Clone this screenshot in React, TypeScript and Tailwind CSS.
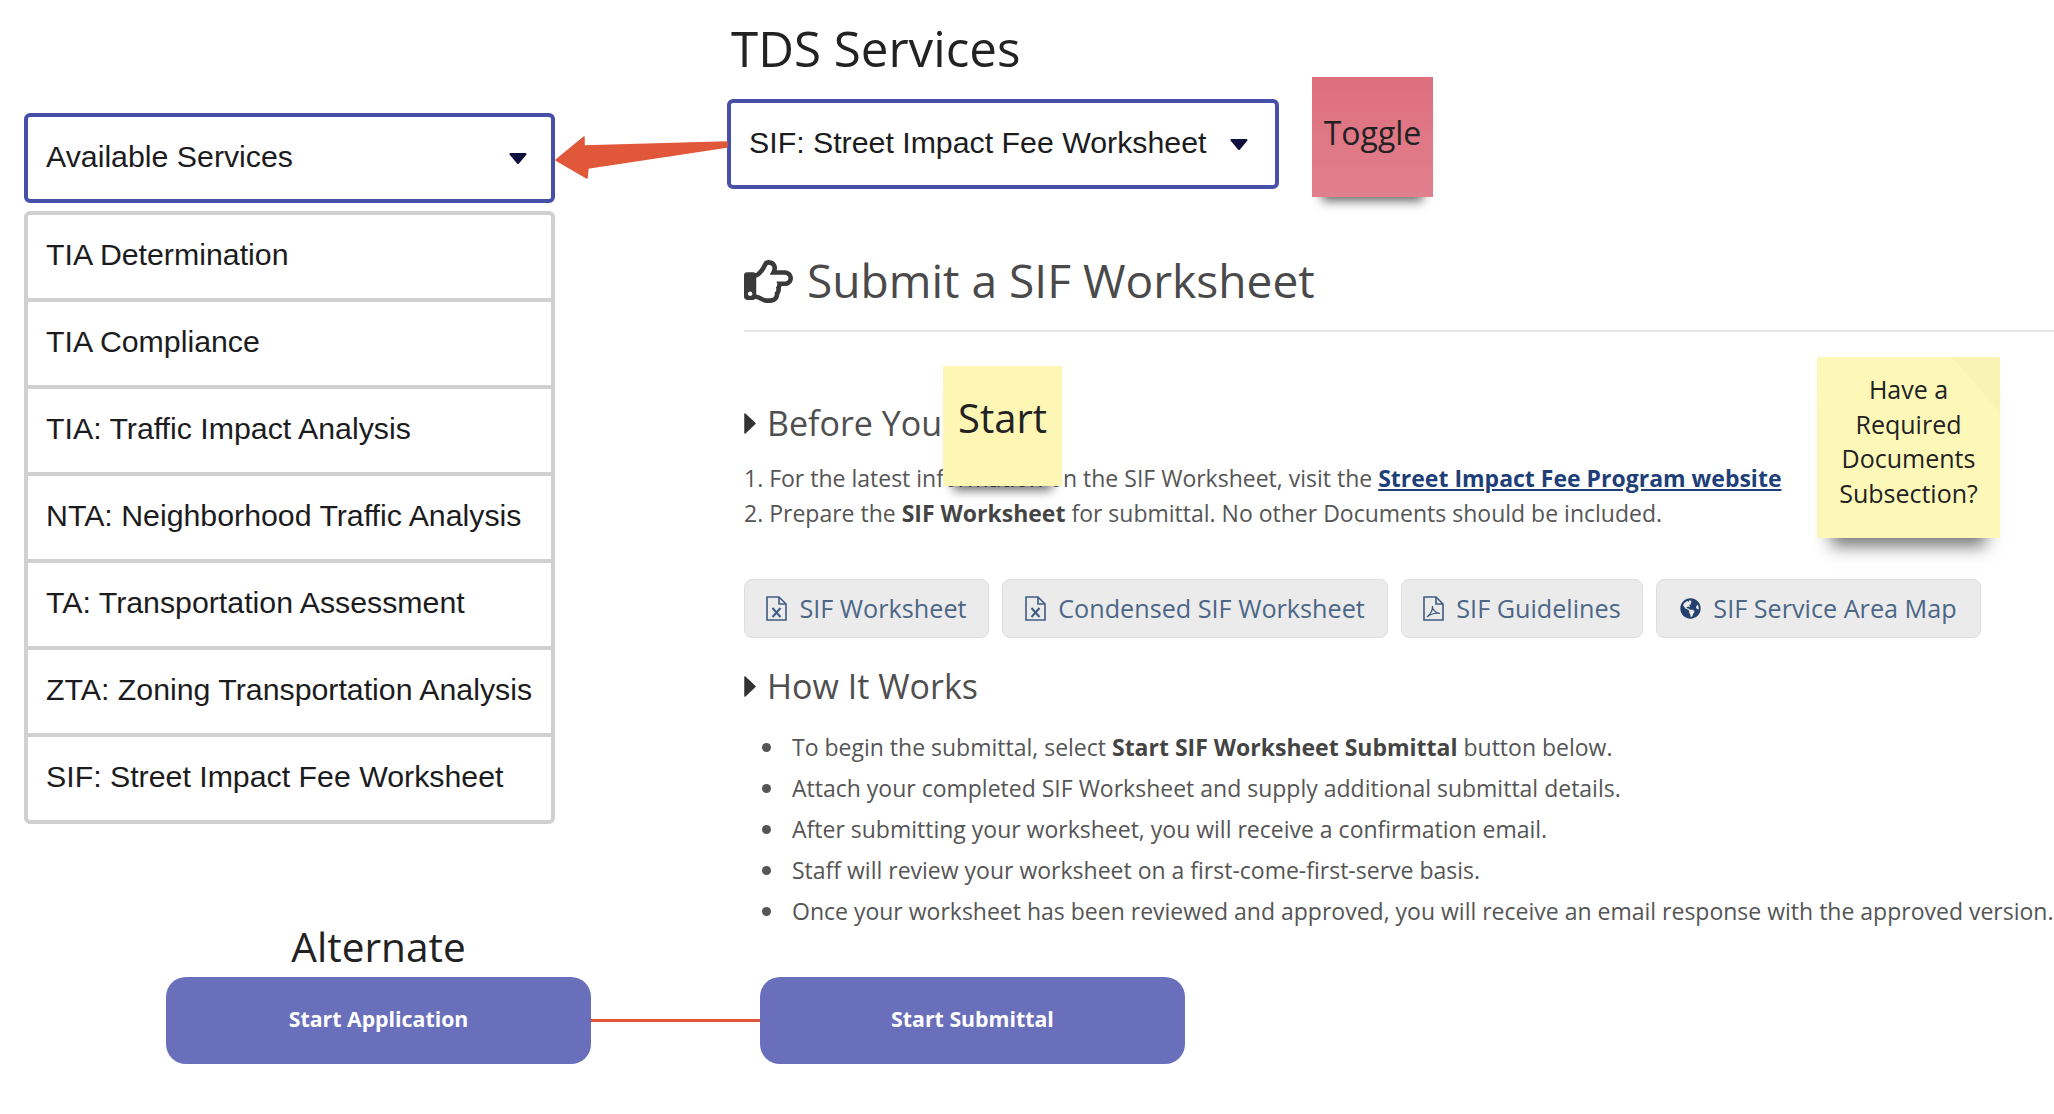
import { FaGlobeAmericas, FaRegHandPointRight } from 'react-icons/fa'
import type { ReactNode } from 'react'

const services = [
  'TIA Determination',
  'TIA Compliance',
  'TIA: Traffic Impact Analysis',
  'NTA: Neighborhood Traffic Analysis',
  'TA: Transportation Assessment',
  'ZTA: Zoning Transportation Analysis',
  'SIF: Street Impact Fee Worksheet',
]

function FileIcon({ children }: { children: ReactNode }) {
  return (
    <svg width="21" height="25" viewBox="0 0 21 25" fill="none" stroke="#3f5c82" strokeWidth="1.6" className="shrink-0">
      <path d="M1 1H13L20 8V24H1Z" />
      <path d="M13 1V8H20" />
      {children}
    </svg>
  )
}

const excel = <FileIcon><path d="M6.5 12L14.5 21M14.5 12L6.5 21" strokeWidth="2" /></FileIcon>
const pdf = <FileIcon><path d="M4 21C8 18 10 13 9.5 10C9 13 12 17 17 17.5C13 16.5 7 18 4 21Z" strokeWidth="1.2" /></FileIcon>

const docs = [
  { label: 'SIF Worksheet', icon: excel, width: 'w-[245px]' },
  { label: 'Condensed SIF Worksheet', icon: excel, width: 'w-[386px]' },
  { label: 'SIF Guidelines', icon: pdf, width: 'w-[242px]' },
  { label: 'SIF Service Area Map', icon: <FaGlobeAmericas className="text-[21px] text-[#24406e] shrink-0" />, width: 'w-[325px]' },
]

function Select({ label, className }: { label: string; className: string }) {
  return (
    <div className={`flex items-center justify-between h-[90px] border-[4px] border-[#474fa8] rounded-[6px] bg-white pl-[18px] pb-[2px] text-[#1c1c1e] font-['Liberation_Sans',sans-serif] text-[30.3px] ${className}`}>
      <span>{label}</span>
      <svg width="18" height="11" viewBox="0 0 18 11" className="mt-[3px]">
        <path d="M1.5 1H16.5L9 10Z" fill="#10103f" stroke="#10103f" strokeWidth="2" strokeLinejoin="round" />
      </svg>
    </div>
  )
}

function SectionTitle({ children }: { children: string }) {
  return (
    <h3 className="flex items-center h-[50px] text-[34px] text-[#4f4f4f] font-normal whitespace-nowrap">
      <svg width="12" height="21" viewBox="0 0 12 21" className="mr-[11px] shrink-0">
        <path d="M1 1L11 10.5L1 20Z" fill="#333" stroke="#333" strokeWidth="1.5" strokeLinejoin="round" />
      </svg>
      <span>{children}</span>
    </h3>
  )
}

export default function App() {
  return (
    <div className="relative w-[2054px] h-[1114px] overflow-hidden bg-white font-['Open_Sans',sans-serif]">
      <div className="flex h-[925px]">
        {/* Service picker */}
        <div className="ml-[24px] w-[531px] pt-[113px]">
          <Select label="Available Services" className="pr-[24px]" />
          <div className="mt-[8px] border-[4px] border-[#d0d0d0] rounded-[6px] font-['Liberation_Sans',sans-serif] text-[30.3px] text-[#1c1c1e]">
            {services.map((s, i) => (
              <div key={s} className={`flex items-center pl-[18px] pb-[3px] ${i > 0 ? 'h-[87px] border-t-[4px] border-[#d0d0d0]' : 'h-[83px]'}`}>
                {s}
              </div>
            ))}
          </div>
        </div>

        {/* Page content */}
        <div className="ml-[172px] flex-1 min-w-0">
          <h1 className="pl-[4px] pt-[17px] h-[99px] text-[49.3px] leading-[62px] text-[#222] whitespace-nowrap">TDS Services</h1>
          <Select label="SIF: Street Impact Fee Worksheet" className="w-[552px] pr-[27px]" />

          <div className="pl-[17px] mt-[57px]">
            <div className="flex items-center gap-[14px] h-[70px] text-[#4a4a4a]">
              <FaRegHandPointRight className="text-[49px] text-[#3a3a3a] shrink-0" />
              <h2 className="text-[46.1px] font-normal whitespace-nowrap">Submit a SIF Worksheet</h2>
            </div>
            <div className="mt-[14px] h-[2px] bg-[#e4e4e4]" />

            <div className="mt-[66px]">
              <SectionTitle>Before You Start:</SectionTitle>
            </div>
            <ol className="mt-[13px] text-[23px] leading-[35px] text-[#555] whitespace-nowrap">
              <li>1. For the latest information on the SIF Worksheet, visit the <a className="font-bold underline text-[#1f3f78]">Street Impact Fee Program website</a></li>
              <li>2. Prepare the <b className="text-[#444]">SIF Worksheet</b> for submittal. No other Documents should be included.</li>
            </ol>

            <div className="mt-[48px] flex gap-[13px]">
              {docs.map(({ label, icon, width }) => (
                <button key={label} className={`flex items-center justify-center gap-[12px] h-[59px] ${width} shrink-0 bg-[#ebebeb] border border-[#dedede] rounded-[8px] text-[25.2px] text-[#4c6687] whitespace-nowrap`}>
                  {icon}
                  <span>{label}</span>
                </button>
              ))}
            </div>

            <div className="mt-[23px]">
              <SectionTitle>How It Works</SectionTitle>
            </div>
            <ul className="mt-[16px] text-[23px] leading-[41px] text-[#555] whitespace-nowrap">
              {[
                <>To begin the submittal, select <b className="text-[#444]">Start SIF Worksheet Submittal</b> button below.</>,
                'Attach your completed SIF Worksheet and supply additional submittal details.',
                'After submitting your worksheet, you will receive a confirmation email.',
                'Staff will review your worksheet on a first-come-first-serve basis.',
                'Once your worksheet has been reviewed and approved, you will receive an email response with the approved version.',
              ].map((item, i) => (
                <li key={i} className="flex items-center">
                  <span className="ml-[18px] w-[9px] h-[9px] rounded-full bg-[#555] shrink-0" />
                  <span className="ml-[21px]">{item}</span>
                </li>
              ))}
            </ul>
          </div>
        </div>
      </div>

      {/* Alternate flow */}
      <div className="pl-[166px]">
        <div className="w-[425px] h-[52px] text-center text-[40.6px] leading-[44px] text-[#222]">Alternate</div>
        <div className="flex items-center">
          <div className="flex items-center justify-center w-[425px] h-[87px] pb-[4px] rounded-[20px] bg-[#6a6fbc] text-white font-bold text-[21.3px]">Start Application</div>
          <div className="w-[169px] h-[3px] bg-[#e0553a]" />
          <div className="flex items-center justify-center w-[425px] h-[87px] pb-[4px] rounded-[20px] bg-[#6a6fbc] text-white font-bold text-[21.3px]">Start Submittal</div>
        </div>
      </div>

      {/* Arrow between the two selects */}
      <svg className="absolute left-[555px] top-[130px]" width="173" height="50" viewBox="0 0 173 50">
        <path d="M1 30L29 7L29 16L172 12V17L33 38L32 48Z" fill="#e0573a" stroke="#e0573a" strokeWidth="1.5" strokeLinejoin="round" />
      </svg>

      {/* Sticky notes */}
      <div className="absolute left-[1312px] top-[77px] w-[121px] h-[120px] bg-gradient-to-b from-[#dd6f7e] to-[#e27f8c] shadow-[0_14px_10px_-10px_rgba(0,0,0,0.6)] flex items-center justify-center pb-[9px] text-[32px] text-[#222]">Toggle</div>
      <div className="absolute left-[943px] top-[366px] w-[119px] h-[120px] bg-[#fdf6b5] shadow-[0_14px_10px_-10px_rgba(0,0,0,0.6)] flex items-center justify-center pb-[16px] text-[40px] text-[#222]">Start</div>
      <div className="absolute left-[1817px] top-[357px] w-[183px] h-[181px] bg-[#fdf8b8] shadow-[0_22px_16px_-14px_rgba(0,0,0,0.55)] flex items-center justify-center pb-[13px] text-center text-[25px] leading-[34.5px] text-[#222]">
        <svg className="absolute right-0 top-0" width="48" height="55" viewBox="0 0 48 55">
          <path d="M0 0H48V55Z" fill="#f9f3b4" />
        </svg>
        <span className="relative">Have a<br />Required<br />Documents<br />Subsection?</span>
      </div>
    </div>
  )
}
